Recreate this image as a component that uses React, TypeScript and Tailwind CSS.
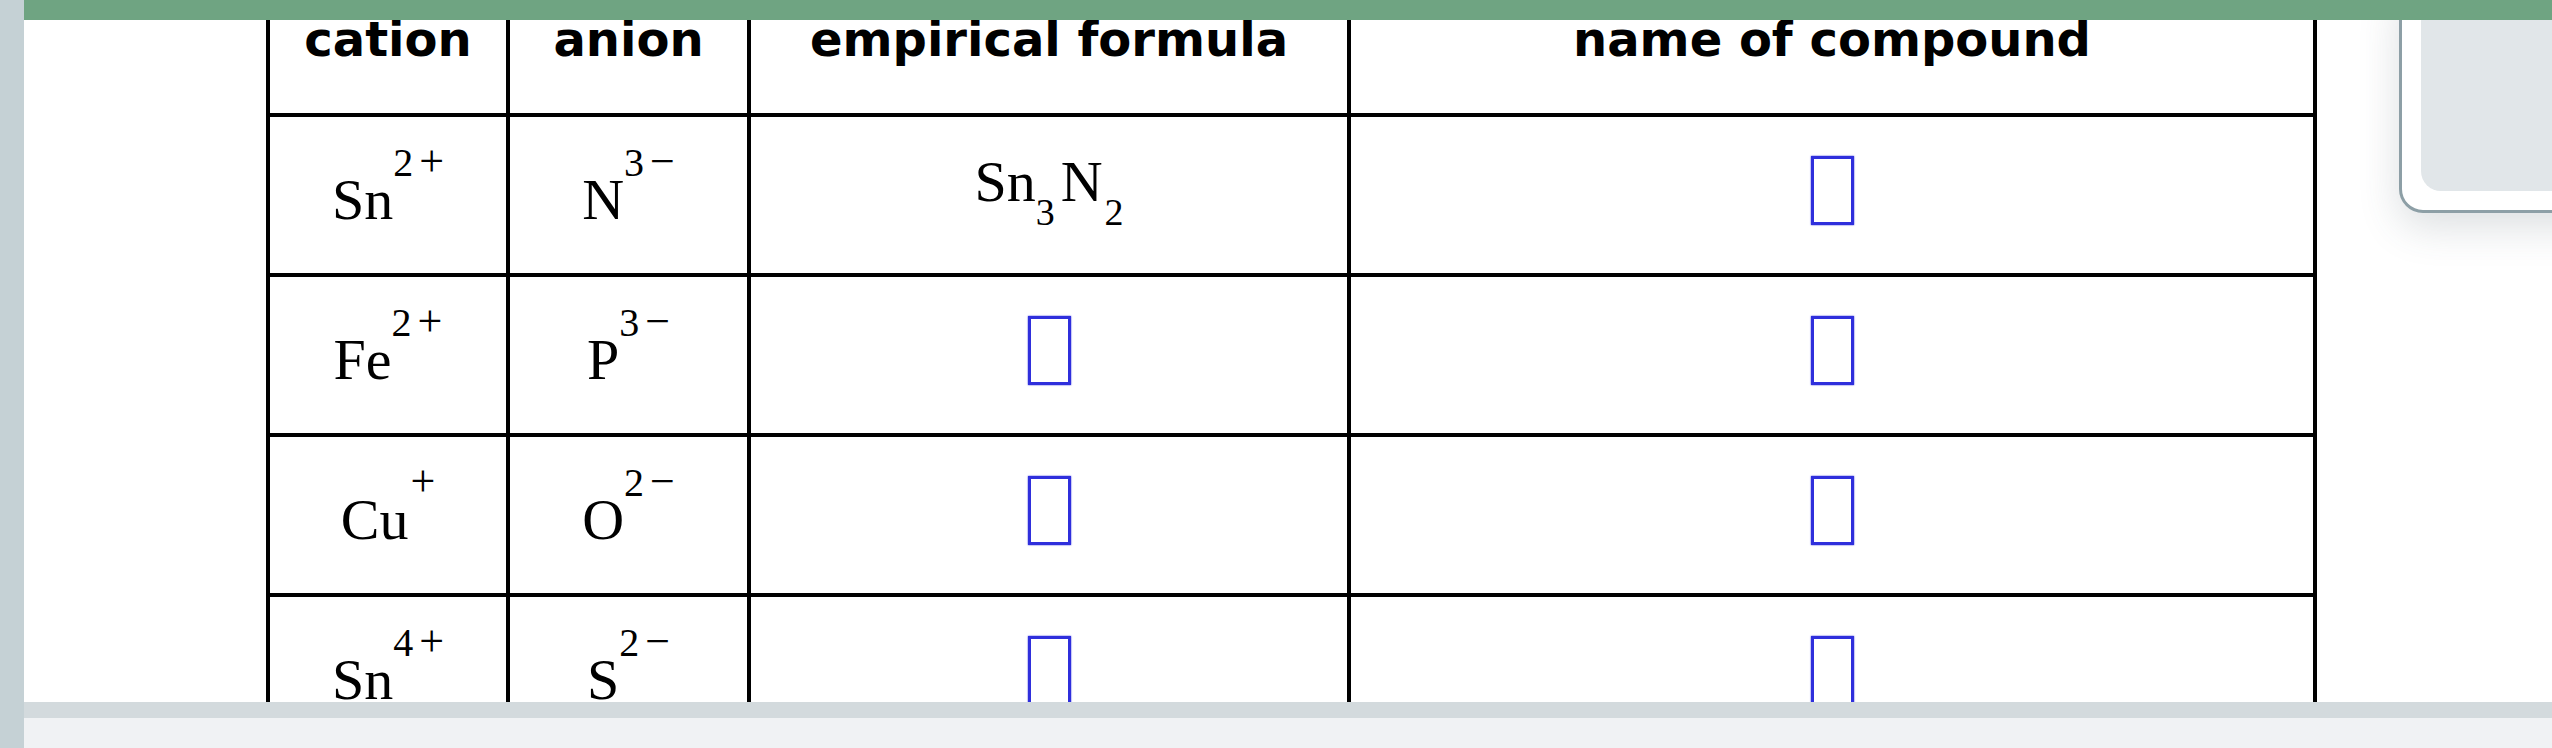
const ROWS = [
  { cation: { symbol: 'Sn', charge: '2', sign: '+' }, anion: { symbol: 'N', charge: '3', sign: '−' }, formula: true },
  { cation: { symbol: 'Fe', charge: '2', sign: '+' }, anion: { symbol: 'P', charge: '3', sign: '−' }, formula: false },
  { cation: { symbol: 'Cu', charge: '', sign: '+' }, anion: { symbol: 'O', charge: '2', sign: '−' }, formula: false },
  { cation: { symbol: 'Sn', charge: '4', sign: '+' }, anion: { symbol: 'S', charge: '2', sign: '−' }, formula: false },
]

const HEADERS = ['cation', 'anion', 'empirical formula', 'name of compound']

function Ion({ symbol, charge, sign }: { symbol: string; charge: string; sign: string }) {
  return (
    <span className="inline-flex items-start font-['Liberation_Serif',serif] text-black">
      <span className="text-[58px] leading-none">{symbol}</span>
      <span className="-mt-[31px] flex items-baseline">
        {charge && <span className="text-[40px] leading-none">{charge}</span>}
        <span className={`text-[44px] leading-none ${charge ? 'ml-[6px]' : 'ml-[2px]'}`}>{sign}</span>
      </span>
    </span>
  )
}

function Formula() {
  return (
    <span className="inline-flex items-start font-['Liberation_Serif',serif] text-black">
      <span className="text-[58px] leading-none">Sn</span>
      <span className="mt-[40px] text-[38px] leading-none">3</span>
      <span className="ml-[6px] text-[58px] leading-none">N</span>
      <span className="mt-[40px] ml-[2px] text-[38px] leading-none">2</span>
    </span>
  )
}

// empty answer slot
function AnswerBox() {
  return (
    <div className="mx-auto h-[69px] w-[43px] border-[3px] border-[#2f2fdc] shadow-[0_0_1.5px_#2f2fdc]" />
  )
}

export default function App() {
  return (
    <div className="flex h-[748px] w-full overflow-hidden bg-white">
      <div className="w-[24px] shrink-0 bg-[#c5d1d5]" />

      <div className="flex min-w-0 flex-1 flex-col">
        <div className="relative z-10 h-[20px] shrink-0 bg-[#6fa482]" />

        <div className="flex h-[682px] shrink-0 items-start overflow-hidden bg-white">
          {/* Table */}
          <div className="-mt-[20px] ml-[242px] grid shrink-0 grid-cols-[236px_237px_596px_962px] grid-rows-[109px_156px_156px_156px_156px] gap-[4px] bg-black p-[4px]">
            {HEADERS.map(h => (
              <div
                key={h}
                className="bg-white pt-[7px] text-center font-['DejaVu_Sans',sans-serif] text-[48px] font-bold leading-[56px] text-black"
              >
                {h}
              </div>
            ))}

            {ROWS.map((r, i) => (
              <div key={i} className="contents">
                <div className="bg-white pt-[54px] text-center">
                  <Ion {...r.cation} />
                </div>
                <div className="bg-white pt-[54px] text-center">
                  <Ion {...r.anion} />
                </div>
                <div className={`bg-white text-center ${r.formula ? 'pt-[36px]' : 'pt-[39px]'}`}>
                  {r.formula ? <Formula /> : <AnswerBox />}
                </div>
                <div className="bg-white pt-[39px]">
                  <AnswerBox />
                </div>
              </div>
            ))}
          </div>

          {/* Side card */}
          <div className="-mt-[40px] ml-[82px] h-[233px] w-[320px] shrink-0 rounded-[24px] border-[3px] border-[#8d9fa6] bg-white p-[19px] shadow-[0_14px_40px_rgba(60,80,90,0.18)]">
            <div className="h-full w-full rounded-[20px] bg-[#e1e6e9]" />
          </div>
        </div>

        <div className="h-[16px] shrink-0 bg-[#d3dadd]" />
        <div className="flex-1 bg-[#f0f2f4]" />
      </div>
    </div>
  )
}
